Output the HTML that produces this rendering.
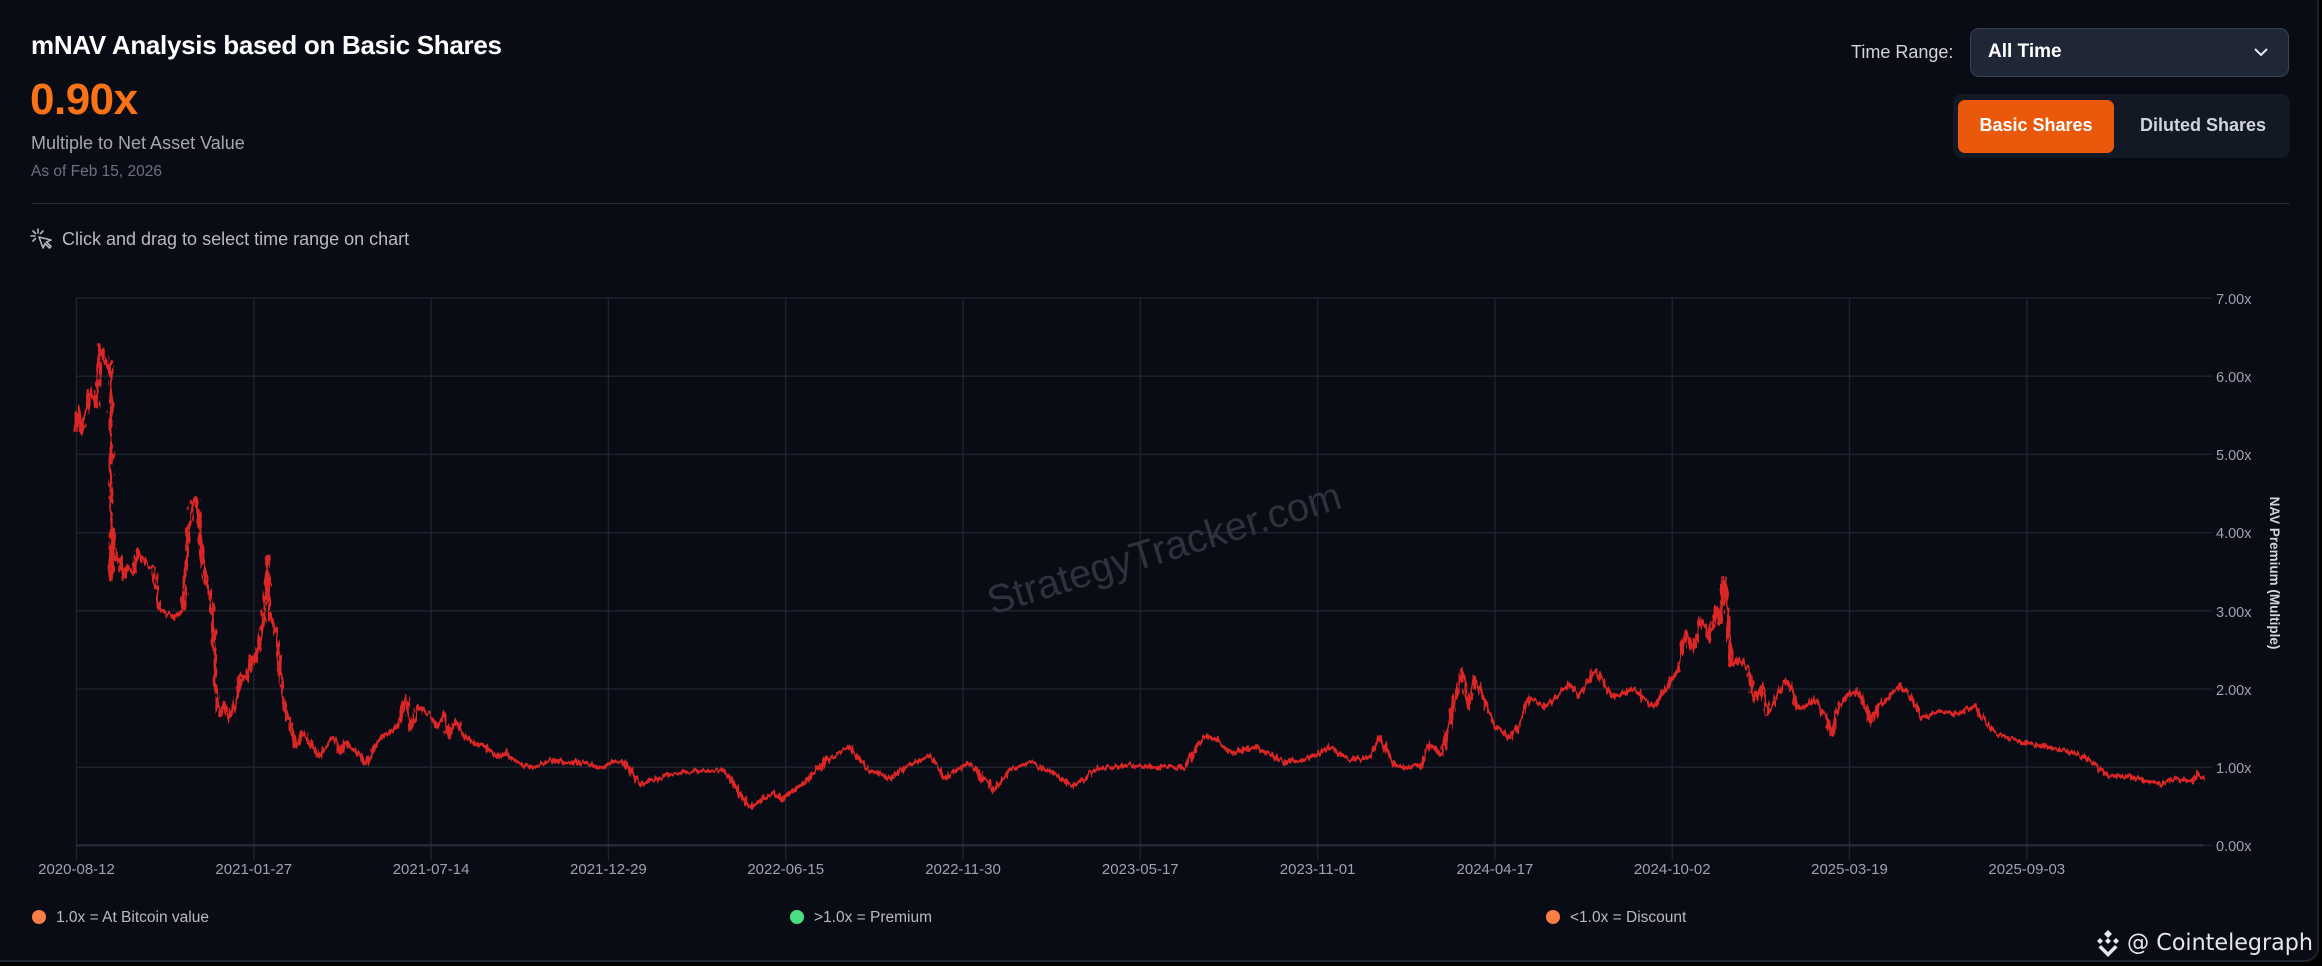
<!DOCTYPE html>
<html><head><meta charset="utf-8"><style>
html,body{margin:0;padding:0;background:#000;}
body{width:2322px;height:966px;position:relative;overflow:hidden;font-family:"Liberation Sans",Arial,sans-serif;}
.card{position:absolute;left:0;top:0;width:2319px;height:962px;background:#090c14;border-radius:0 0 14px 0;border-bottom:2px solid #1f2633;border-right:2px solid #1a202b;box-sizing:border-box;}
.abs{position:absolute;white-space:nowrap;}
</style></head><body>
<div class="card"></div>
<div class="abs" style="left:31px;top:30px;font-size:26px;font-weight:bold;color:#fff;letter-spacing:-0.3px">mNAV Analysis based on Basic Shares</div>
<div class="abs" style="left:30px;top:75px;font-size:44px;font-weight:bold;color:#f97316;letter-spacing:-0.5px">0.90x</div>
<div class="abs" style="left:31px;top:133px;font-size:18px;color:#a3a8b2">Multiple to Net Asset Value</div>
<div class="abs" style="left:31px;top:163px;font-size:15.5px;color:#6b7280">As of Feb 15, 2026</div>
<div class="abs" style="left:31px;top:203px;width:2259px;height:1px;background:#222834"></div>
<svg class="abs" style="left:30px;top:228px" width="24" height="22" viewBox="0 0 24 22"><g stroke="#b0b5bf" stroke-width="1.6" fill="none" stroke-linecap="round"><path d="M8 1v4M1 8h4M3 3l2.5 2.5M13 3l-2.5 2.5M3 13l2.5-2.5"/><path d="M9 9l4 11 2-4.5 4.5 4.5 1.5-1.5-4.5-4.5 4.5-2z" stroke-linejoin="round"/></g></svg>
<div class="abs" style="left:62px;top:229px;font-size:18px;color:#b6bac2">Click and drag to select time range on chart</div>

<div class="abs" style="left:1851px;top:42px;font-size:18px;color:#d1d5db">Time Range:</div>
<div class="abs" style="left:1970px;top:28px;width:319px;height:49px;box-sizing:border-box;background:#1f2737;border:1px solid #374151;border-radius:9px"></div>
<div class="abs" style="left:1988px;top:41px;font-size:19px;font-weight:bold;color:#fff">All Time</div>
<svg class="abs" style="left:2253px;top:46px" width="16" height="12" viewBox="0 0 16 12"><path d="M2 3l6 6 6-6" stroke="#e5e7eb" stroke-width="2" fill="none"/></svg>
<div class="abs" style="left:1953px;top:94px;width:337px;height:64px;background:#121824;border-radius:9px"></div>
<div class="abs" style="left:1958px;top:100px;width:156px;height:53px;background:#ea580c;border-radius:7px"></div>
<div class="abs" style="left:1958px;top:115px;width:156px;text-align:center;font-size:18px;font-weight:bold;color:#fff">Basic Shares</div>
<div class="abs" style="left:2128px;top:115px;width:150px;text-align:center;font-size:18px;font-weight:bold;color:#d1d5db">Diluted Shares</div>

<svg class="abs" style="left:0;top:0" width="2322" height="966" viewBox="0 0 2322 966">
<defs><filter id="jit" x="-5%" y="-5%" width="110%" height="110%"><feTurbulence type="fractalNoise" baseFrequency="0.35 0.08" numOctaves="2" seed="4" result="n"/><feDisplacementMap in="SourceGraphic" in2="n" scale="9" xChannelSelector="R" yChannelSelector="G"/></filter></defs>
<g stroke="#1f2530" stroke-width="1.3">
<path d="M76.5 298H2203M76.5 376.2H2203M76.5 454.4H2203M76.5 532.6H2203M76.5 610.8H2203M76.5 689H2203M76.5 767.2H2203"/>
<path d="M76.5 298V860M253.8 298V860M431.1 298V860M608.4 298V860M785.7 298V860M963 298V860M1140.3 298V860M1317.6 298V860M1494.9 298V860M1672.2 298V860M1849.5 298V860M2026.8 298V860"/>
<path d="M2203 298H2212M2203 376.2H2212M2203 454.4H2212M2203 532.6H2212M2203 610.8H2212M2203 689H2212M2203 767.2H2212M2203 845.4H2212"/>
</g>
<path d="M76.5 845.4H2203" stroke="#2a303b" stroke-width="2"/>
<text x="1163" y="562" transform="rotate(-17 1163 545)" text-anchor="middle" font-family="Liberation Sans,sans-serif" font-size="40" fill="#2e323c">StrategyTracker.com</text>
<polyline filter="url(#jit)" fill="none" stroke="#dc2626" stroke-width="3.6" stroke-linejoin="round" points="76.5,430 79,407 82,433 87,403 91,388 96,408 100,345 104.6,360 108,368 110.7,363 111,580 113,530 116,560 120,557 123.5,577 127.5,567 134,573 137,550 143,560 149,567 154,567 158,607 166,613 173.5,618 182.7,610 187.8,537 193,500 197,498 200,540 204,573 209,590 213,620 216,693 220,717 224.5,702 228.6,722 235.7,700 240.8,675 247.4,680 251,657 255,663 262.8,627 267.3,557 269.4,617 275.5,627 279.6,667 284.7,710 289.8,720 296,747 302,733 308.7,740 318.9,757 326.5,745 334,737 339,752 347,743 357,753 366,765 375,745 383.7,735 393,732 399,723 405.6,695 410.7,730 417,707 426,712 437.8,727 444,713 449,738 455.6,720 465,737 474.5,743 485.7,747 497.4,757 506,752 518,763 533,768 551,760 566,763 581.6,762 602,768 612,762 625,762 640,785 666,775 700,770 724,770 749,807 774,793 782,800 807,780 824,762 849,747 869,770 890,778 907,767 930,754 944,778 969,763 994,790 1010,770 1031,762 1052,772 1073,787 1097,768 1131,765 1164,767 1185,768 1204,736 1218,740 1230,753 1255,747 1284,762 1305,760 1330,747 1350,760 1371,757 1379,737 1396,767 1421,765 1429,743 1442,755 1454,703 1462,670 1469,707 1475,677 1483,697 1495,727 1510,738 1520,723 1529,697 1545,708 1570,683 1578,698 1595,670 1613,697 1632,688 1653,707 1665,690 1678,670 1686,633 1693,650 1701,617 1709,640 1716,607 1720,624 1724,578 1728,617 1731,666 1739,659 1749,670 1754,701 1762,686 1768,714 1778,693 1787,680 1799,709 1815,699 1825,716 1832,735 1838,705 1857,689 1867,709 1871,724 1878,705 1888,699 1899,686 1909,693 1922,718 1940,711 1956,714 1975,707 1993,732 2011,739 2035,745 2056,749 2077,753 2092,762 2108,776 2129,776 2145,781 2161,785 2176,779 2192,781 2197,774 2203,778"/>
<g font-family="Liberation Sans,sans-serif" font-size="14.5" fill="#9ca3af">
<text x="2216" y="304">7.00x</text><text x="2216" y="382">6.00x</text><text x="2216" y="460">5.00x</text><text x="2216" y="538">4.00x</text><text x="2216" y="617">3.00x</text><text x="2216" y="695">2.00x</text><text x="2216" y="773">1.00x</text><text x="2216" y="851">0.00x</text>
</g>
<text x="2270" y="573" transform="rotate(90 2270 573)" text-anchor="middle" font-family="Liberation Sans,sans-serif" font-size="13.5" font-weight="bold" fill="#d1d5db">NAV Premium (Multiple)</text>
<g font-family="Liberation Sans,sans-serif" font-size="15" fill="#9ca3af" text-anchor="middle">
<text x="76.5" y="874">2020-08-12</text><text x="253.8" y="874">2021-01-27</text><text x="431.1" y="874">2021-07-14</text><text x="608.4" y="874">2021-12-29</text><text x="785.7" y="874">2022-06-15</text><text x="963" y="874">2022-11-30</text><text x="1140.3" y="874">2023-05-17</text><text x="1317.6" y="874">2023-11-01</text><text x="1494.9" y="874">2024-04-17</text><text x="1672.2" y="874">2024-10-02</text><text x="1849.5" y="874">2025-03-19</text><text x="2026.8" y="874">2025-09-03</text>
</g>
<circle cx="39" cy="917" r="7" fill="#f97d45"/><circle cx="797" cy="917" r="7" fill="#4ade80"/><circle cx="1553" cy="917" r="7" fill="#f97d45"/>
<g font-family="Liberation Sans,sans-serif" font-size="15.5" fill="#b6bac2">
<text x="56" y="922">1.0x = At Bitcoin value</text><text x="814" y="922">&gt;1.0x = Premium</text><text x="1570" y="922">&lt;1.0x = Discount</text>
</g>
<g fill="#e5e7eb" transform="translate(2108 941)"><path d="M0-11l4 4-4 4-4-4zM-11 0l3-3 3 3-3 3zM11 0l-3-3-3 3 3 3zM0-3l3 3-3 3-3-3zM-7 4l7 7 7-7 2.5 2.5-9.5 9.5-9.5-9.5z"/></g>
<text x="2127" y="950" font-family="DejaVu Sans,sans-serif" font-size="23" fill="#e5e7eb" textLength="186" lengthAdjust="spacingAndGlyphs">@ Cointelegraph</text>
</svg>
</body></html>
